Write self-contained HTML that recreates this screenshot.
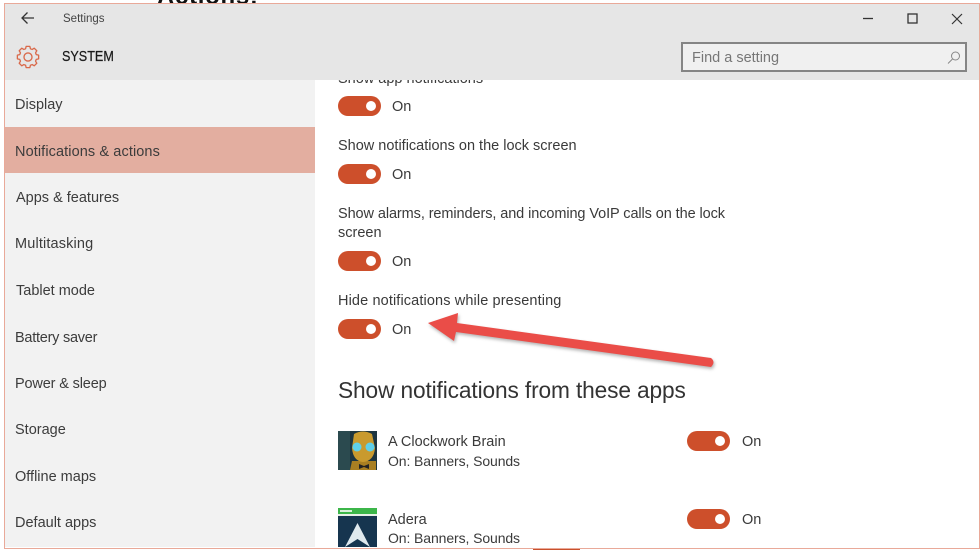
<!DOCTYPE html>
<html><head><meta charset="utf-8"><style>
html,body{margin:0;padding:0;background:#fff}
body{position:relative;width:980px;height:550px;overflow:hidden;font-family:"Liberation Sans",sans-serif;color:#333}
#w{position:absolute;left:0;top:0;width:980px;height:550px;overflow:hidden;filter:blur(.3px)}
.a{position:absolute;white-space:nowrap}
.t{position:absolute;white-space:nowrap;font-size:14.5px;line-height:18px;color:#3a3a3a;transform:translateY(1px)}
.nav{position:absolute;left:15px;font-size:14.5px;line-height:18px;color:#3c3c3c;white-space:nowrap;transform:translateY(1px)}
.sw{position:absolute;width:43px;height:20px;border-radius:10px;background:#cd4f2b}
.sw:after{content:"";position:absolute;right:5px;top:5px;width:10px;height:10px;border-radius:50%;background:#fff}
.s{font-size:14px;letter-spacing:-.1px}
</style></head><body><div id="w">
<div class="a" style="left:157px;top:-15px;font-size:24px;font-weight:bold;letter-spacing:.7px;line-height:24px;color:#111">Actions:</div>
<div class="a" style="left:533px;top:549px;width:47px;height:1px;background:#c9502c"></div>
<div class="a" style="left:4px;top:3px;width:974px;height:544px;background:#fff;border:1px solid #e9a999;box-sizing:content-box"></div>
<div class="a" style="left:5px;top:4px;width:974px;height:76px;background:#e6e6e6"></div>
<div class="a" style="left:5px;top:80px;width:310px;height:467px;background:#f2f2f2"></div>
<div class="a" style="left:5px;top:127px;width:310px;height:46px;background:#e3aea0"></div>

<svg class="a" style="left:0;top:0" width="980" height="80" viewBox="0 0 980 80" fill="none">
<path d="M34 18H22.500M27.500 12.500L22 18l5.500 5.500" stroke="#333" stroke-width="1.300"/>
<g stroke="#d9694a" stroke-width="1.800" stroke-linejoin="round" transform="translate(28 57) scale(.733) translate(-28 -61)">
<path d="M25.500 46.500h5l.8 3.200 2.400 1 2.800-1.700 3.500 3.500-1.700 2.800 1 2.400 3.200.8v5l-3.200.8-1 2.400 1.700 2.800-3.500 3.500-2.800-1.700-2.400 1-.8 3.200h-5l-.8-3.200-2.400-1-2.800 1.700-3.500-3.500 1.700-2.800-1-2.400-3.200-.8v-5l3.200-.8 1-2.400-1.700-2.800 3.500-3.500 2.800 1.700 2.400-1z"/>
<circle cx="28" cy="61" r="5.500"/>
</g>
<path d="M863 18.500h10" stroke="#333" stroke-width="1.300"/>
<rect x="908" y="14" width="9" height="9" stroke="#333" stroke-width="1.300"/>
<path d="M952 14l10 10M962 14l-10 10" stroke="#333" stroke-width="1.200"/>
</svg>

<div class="a" style="left:63px;top:12px;font-size:11.500px;line-height:14px;color:#444">Settings</div>
<div class="a" style="left:62px;top:48px;font-size:15px;line-height:18px;color:#1a1a1a;-webkit-text-stroke:.25px #1a1a1a;transform:scaleX(.84);transform-origin:0 0">SYSTEM</div>

<div class="a" style="left:681px;top:42px;width:286px;height:30px;box-sizing:border-box;border:2px solid #858585;background:#f0f0f0"></div>
<div class="a" style="left:692px;top:49px;font-size:14.500px;line-height:18px;color:#777">Find a setting</div>
<svg class="a" style="left:946px;top:50px" width="16" height="16" viewBox="0 0 16 16" fill="none" stroke="#888" stroke-width="1"><circle cx="9.500" cy="6" r="4"/><path d="M6.500 9L2 13.500"/></svg>

<div class="nav" style="top:95px">Display</div>
<div class="nav" style="top:142px;letter-spacing:.1px">Notifications &amp; actions</div>
<div class="nav" style="top:188px;left:16px">Apps &amp; features</div>
<div class="nav" style="top:234px;letter-spacing:.15px">Multitasking</div>
<div class="nav" style="top:281px;left:16px">Tablet mode</div>
<div class="nav" style="top:328px;letter-spacing:-.25px">Battery saver</div>
<div class="nav" style="top:374px;letter-spacing:-.15px">Power &amp; sleep</div>
<div class="nav" style="top:420px">Storage</div>
<div class="nav" style="top:467px">Offline maps</div>
<div class="nav" style="top:513px">Default apps</div>

<div style="position:absolute;left:315px;top:80px;width:664px;height:467px;overflow:hidden">
<div class="t" style="left:23px;top:-11px">Show app notifications</div>
<div class="sw" style="left:23px;top:16px"></div><div class="t" style="left:77px;top:17px">On</div>
<div class="t" style="left:23px;top:56px">Show notifications on the lock screen</div>
<div class="sw" style="left:23px;top:84px"></div><div class="t" style="left:77px;top:85px">On</div>
<div class="t" style="left:23px;top:124px;letter-spacing:-.09px">Show alarms, reminders, and incoming VoIP calls on the lock</div>
<div class="t" style="left:23px;top:143px">screen</div>
<div class="sw" style="left:23px;top:171px"></div><div class="t" style="left:77px;top:172px">On</div>
<div class="t" style="left:23px;top:211px;letter-spacing:.12px">Hide notifications while presenting</div>
<div class="sw" style="left:23px;top:239px"></div><div class="t" style="left:77px;top:240px">On</div>
<div class="t" style="left:23px;top:294px;font-size:22.700px;letter-spacing:-.12px;line-height:30px;color:#333">Show notifications from these apps</div>

<svg class="a" style="left:23px;top:351px" width="39" height="39" viewBox="0 0 39 39">
<rect width="39" height="39" fill="#1d3540"/>
<path d="M0 0h12v39H0z" fill="#2b4a4f"/>
<path d="M12 39l2-9h24v9z" fill="#a97f22"/>
<path d="M16 3q9-5 18 0l3 14q-1 13-12 14-10-1-11-14z" fill="#c99a2e"/>
<circle cx="19" cy="16" r="4.500" fill="#5fd0ea"/><circle cx="32" cy="16" r="4.500" fill="#5fd0ea"/>
<path d="M21 33l5 2 5-2v5l-5-2-5 2z" fill="#222"/>
</svg>
<div class="t" style="left:73px;top:352px">A Clockwork Brain</div>
<div class="t s" style="left:73px;top:371px">On: Banners, Sounds</div>
<div class="sw" style="left:372px;top:351px"></div><div class="t" style="left:427px;top:352px">On</div>

<svg class="a" style="left:23px;top:428px" width="39" height="40" viewBox="0 0 39 40">
<rect width="39" height="40" fill="#16354f"/>
<rect width="39" height="6" fill="#3cb64a"/><rect y="6" width="39" height="2" fill="#e8f0e8"/>
<rect x="2" y="2" width="12" height="2" fill="#d8f0da"/>
<path d="M7 39L19.500 15 32 39l-12.500-8z" fill="#dfe9ee"/>
</svg>
<div class="t" style="left:73px;top:430px">Adera</div>
<div class="t s" style="left:73px;top:448px">On: Banners, Sounds</div>
<div class="sw" style="left:372px;top:429px"></div><div class="t" style="left:427px;top:430px">On</div>
</div>

<svg class="a" style="left:0;top:0;filter:drop-shadow(1px 2px 1.500px rgba(0,0,0,.3))" width="980" height="550" viewBox="0 0 980 550">
<path d="M428 323L458 313 457 323 711 358Q716 362 711 367L456 332 454 341z" fill="#ea4d48"/>
</svg>
</div></body></html>
